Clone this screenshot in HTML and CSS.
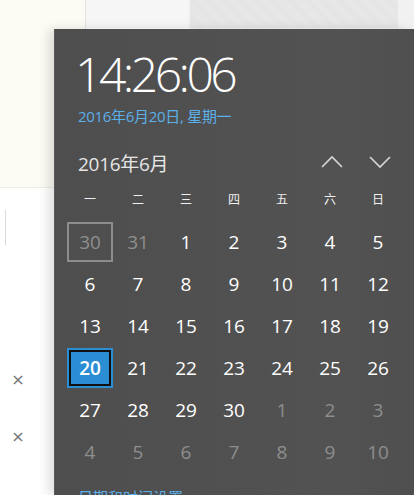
FILE: index.html
```html
<!DOCTYPE html>
<html lang="zh-CN">
<head>
    <meta charset="UTF-8"/>
    <title>日期和时间</title>
    <link rel="stylesheet" href="styles.css">
</head>
<body>

<div class="desktop">
    <div class="pane-left">
        <div class="note"></div>
        <div class="list">
            <div class="field"></div>
            <div class="close first">×</div>
            <div class="close">×</div>
        </div>
    </div>
    <div class="pane-mid">
        <div class="mid-top"></div>
    </div>
    <div class="pane-right">
        <div class="texture"></div>
        <div class="edge"></div>
    </div>
</div>

<div class="flyout">
    <div class="clock">14:26:06</div>
    <div class="today">2016年6月20日, 星期一</div>

    <div class="month-bar">
        <span class="month-name">2016年6月</span>
        <div class="arrows">
            <svg width="24" height="14" viewBox="0 0 24 14"><polyline points="2,12 12,2 22,12" fill="none" stroke="#d6d6d6" stroke-width="1.6"/></svg>
            <svg width="24" height="14" viewBox="0 0 24 14"><polyline points="2,2 12,12 22,2" fill="none" stroke="#d6d6d6" stroke-width="1.6"/></svg>
        </div>
    </div>

    <div class="calendar" id="calendar">
        <div class="wd">一</div><div class="wd">二</div><div class="wd">三</div><div class="wd">四</div><div class="wd">五</div><div class="wd">六</div><div class="wd">日</div>
    </div>

    <div class="settings-link">日期和时间设置</div>
</div>

<script>
    const cal = document.getElementById('calendar');
    const days = [];
    days.push({n: 30, dim: true, box: true});
    days.push({n: 31, dim: true});
    for (let i = 1; i <= 30; i++) {
        days.push({n: i, sel: i === 20});
    }
    for (let i = 1; i <= 10; i++) {
        days.push({n: i, dim: true});
    }

    days.forEach(d => {
        const cell = document.createElement('div');
        cell.className = 'day';
        if (d.dim) cell.classList.add('dim');
        if (d.box) cell.classList.add('boxed');
        if (d.sel) cell.classList.add('selected');
        cell.innerHTML = '<span>' + d.n + '</span>';
        cal.appendChild(cell);
    });
</script>

</body>
</html>
```

FILE: styles.css
```css
* {
    box-sizing: border-box;
}

body {
    margin: 0;
    width: 414px;
    height: 495px;
    overflow: hidden;
    position: relative;
    font-family: "Open Sans", "Noto Sans CJK SC", sans-serif;
    background: #fff;
}

.desktop {
    display: flex;
    height: 495px;
}

.pane-left {
    width: 86px;
    border-right: 1px solid #e2e2e2;
}

.note {
    height: 188px;
    background: #fdfcf4;
    border-bottom: 1px solid #eeeee6;
}

.list {
    position: relative;
    height: 307px;
    background: #fff;
}

.field {
    margin: 22px 0 0 5px;
    width: 8px;
    height: 35px;
    border-left: 1px solid #dadada;
}

.close {
    width: 36px;
    text-align: center;
    font-family: "DejaVu Sans", sans-serif;
    font-size: 16px;
    color: #777;
    line-height: 20px;
}

.close.first {
    margin-top: 125px;
}

.close + .close {
    margin-top: 37px;
}

.pane-mid {
    width: 104px;
    background: #fff;
}

.mid-top {
    height: 28px;
    background: #f6f6f6;
}

.pane-right {
    flex: 1;
    display: flex;
    height: 28px;
    box-shadow: 0 1px 2px rgba(0, 0, 0, 0.08);
}

.texture {
    flex: 1;
    background: repeating-linear-gradient(45deg, #e9e9e9 0, #e9e9e9 1px, #e3e3e3 1px, #e3e3e3 2px);
}

.edge {
    width: 16px;
    background: #f1f1f1;
}

/* clock flyout */

.flyout {
    position: absolute;
    left: 54px;
    top: 29px;
    right: 0;
    bottom: 0;
    background: linear-gradient(90deg, #4e4e4e, #525252 80%, #4f4f4f);
    border-left: 1px solid #5a5a5a;
    box-shadow: -6px 0 10px rgba(0, 0, 0, 0.12);
    color: #fff;
}

.clock {
    margin: 15px 0 0 20px;
    font-size: 48px;
    font-weight: 300;
    line-height: 60px;
    letter-spacing: -3.5px;
    color: #fff;
}

.today {
    margin: 0 0 0 23px;
    font-size: 15px;
    line-height: 24px;
    letter-spacing: -0.3px;
    color: #5cb0ea;
}

.month-bar {
    display: flex;
    align-items: center;
    justify-content: space-between;
    height: 37px;
    margin: 16px 0 0 23px;
    padding-right: 22px;
}

.month-name {
    font-size: 19px;
    color: #e6e6e6;
    letter-spacing: -0.3px;
}

.arrows {
    display: flex;
    gap: 24px;
    margin-top: -2px;
}

.calendar {
    display: grid;
    grid-template-columns: repeat(7, 48px);
    grid-template-rows: 40px repeat(6, 42px);
    margin-left: 11px;
}

.wd {
    display: flex;
    align-items: center;
    justify-content: center;
    align-self: start;
    height: 36px;
    font-size: 12px;
    color: #f0f0f0;
}

.day {
    display: flex;
    align-items: center;
    justify-content: center;
    margin: 1px;
    font-size: 19px;
    color: #fff;
}

.day.dim {
    color: #8e8e8e;
}

.day.boxed {
    border: 2px solid #8d8d8d;
}

.day.selected {
    background: #2b8ed4;
    border: 2px solid #2b8ed4;
    box-shadow: inset 0 0 0 2px #111;
    font-weight: 600;
}

.settings-link {
    margin: 13px 0 0 23px;
    font-size: 15px;
    color: #5cb0ea;
}
```
